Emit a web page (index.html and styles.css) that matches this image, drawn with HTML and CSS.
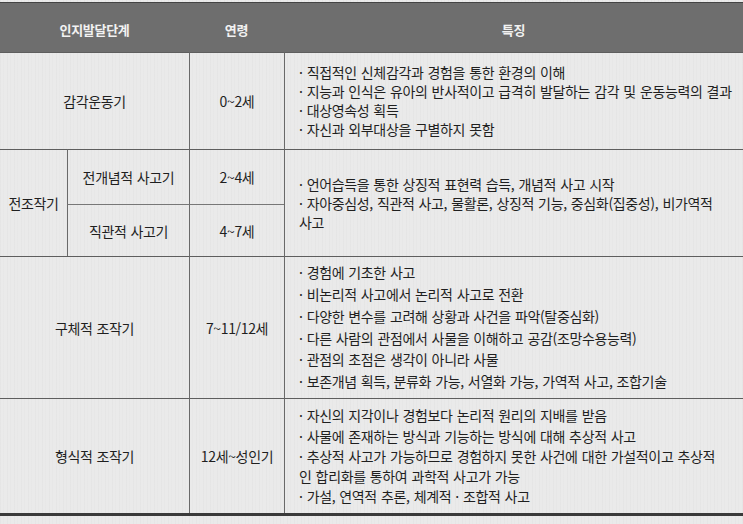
FILE: index.html
```html
<!DOCTYPE html>
<html lang="ko">
<head>
<meta charset="utf-8">
<title>인지발달단계</title>
<link rel="stylesheet" href="styles.css">
</head>
<body>
<div class="sheet">
  <div class="table">
    <div class="hd hd-stage">인지발달단계</div>
    <div class="hd hd-age">연령</div>
    <div class="hd hd-desc">특징</div>

    <div class="cell stage r1">감각운동기</div>
    <div class="cell age r1">0~2세</div>
    <div class="cell desc r1 lh19">
      <p>· 직접적인 신체감각과 경험을 통한 환경의 이해</p>
      <p>· 지능과 인식은 유아의 반사적이고 급격히 발달하는 감각 및 운동능력의 결과</p>
      <p>· 대상영속성 획득</p>
      <p>· 자신과 외부대상을 구별하지 못함</p>
    </div>

    <div class="cell group r2">전조작기</div>
    <div class="cell sub r2a">전개념적 사고기</div>
    <div class="cell age r2a">2~4세</div>
    <div class="cell sub r2b">직관적 사고기</div>
    <div class="cell age r2b">4~7세</div>
    <div class="cell desc r2 lh19">
      <p>· 언어습득을 통한 상징적 표현력 습득, 개념적 사고 시작</p>
      <p>· 자아중심성, 직관적 사고, 물활론, 상징적 기능, 중심화(집중성), 비가역적<br>사고</p>
    </div>

    <div class="cell stage r3">구체적 조작기</div>
    <div class="cell age r3">7~11/12세</div>
    <div class="cell desc r3 lh22">
      <p>· 경험에 기초한 사고</p>
      <p>· 비논리적 사고에서 논리적 사고로 전환</p>
      <p>· 다양한 변수를 고려해 상황과 사건을 파악(탈중심화)</p>
      <p>· 다른 사람의 관점에서 사물을 이해하고 공감(조망수용능력)</p>
      <p>· 관점의 초점은 생각이 아니라 사물</p>
      <p>· 보존개념 획득, 분류화 가능, 서열화 가능, 가역적 사고, 조합기술</p>
    </div>

    <div class="cell stage r4">형식적 조작기</div>
    <div class="cell age r4">12세~성인기</div>
    <div class="cell desc r4 lh20">
      <p>· 자신의 지각이나 경험보다 논리적 원리의 지배를 받음</p>
      <p>· 사물에 존재하는 방식과 기능하는 방식에 대해 추상적 사고</p>
      <p>· 추상적 사고가 가능하므로 경험하지 못한 사건에 대한 가설적이고 추상적<br>인 합리화를 통하여 과학적 사고가 가능</p>
      <p>· 가설, 연역적 추론, 체계적 · 조합적 사고</p>
    </div>
  </div>
</div>
</body>
</html>
```

FILE: styles.css
```css
html, body {
  margin: 0;
  padding: 0;
  background: #ececec;
}

.sheet {
  width: 743px;
  height: 524px;
  padding-top: 2px;
  box-sizing: border-box;
  background-color: #eaeaea;
  background-image:
    repeating-linear-gradient(90deg, rgba(0,0,0,0.018) 0 1px, transparent 1px 3px, rgba(0,0,0,0.012) 3px 4px, transparent 4px 7px);
  font-family: "Noto Sans CJK KR", "Noto Sans", sans-serif;
  color: #1f1f1f;
}

.table {
  display: grid;
  grid-template-columns: 67px 122px 95px 1fr;
  grid-template-rows: 49px 97px 55px 52px 142px 115px;
  border-top: 1px solid #444;
  border-bottom: 3px solid #3a3a3a;
  font-size: 14px;
  letter-spacing: -0.35px;
  word-spacing: 0.5px;
}

.hd {
  background: #6e6e6e;
  color: #f2f2f2;
  font-weight: 700;
  font-size: 13px;
  letter-spacing: -0.3px;
  display: flex;
  align-items: center;
  justify-content: center;
  padding-top: 4px;
  grid-row: 1;
}
.hd-stage { grid-column: 1 / 3; }
.hd-age { grid-column: 3; }
.hd-desc { grid-column: 4; }

.cell {
  border-top: 1px solid #5e5e5e;
  display: flex;
  align-items: center;
  justify-content: center;
  text-align: center;
}

.stage { grid-column: 1 / 3; }
.group { grid-column: 1; grid-row: 3 / 5; }
.sub { grid-column: 2; border-left: 1px solid #6a6a6a; }
.age { grid-column: 3; border-left: 1px solid #6a6a6a; }
.desc {
  grid-column: 4;
  border-left: 1px solid #6a6a6a;
  flex-direction: column;
  align-items: flex-start;
  justify-content: center;
  text-align: left;
  padding-left: 14px;
  white-space: nowrap;
}
.desc p { margin: 0; }

.r1 { grid-row: 2; }
.r2 { grid-row: 3 / 5; }
.r2a { grid-row: 3; }
.r2b { grid-row: 4; }
.r3 { grid-row: 5; }
.r4 { grid-row: 6; }

.sub.r2b, .age.r2b { border-top-color: #777; }

.lh19 { line-height: 19px; }
.lh20 { line-height: 20.3px; }
.lh22 { line-height: 21.8px; }
```
